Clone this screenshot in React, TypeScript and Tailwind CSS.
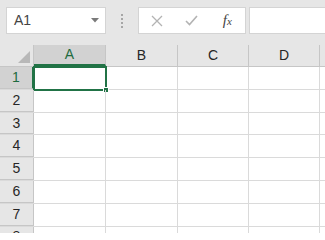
import React from 'react';

const cols = ['A', 'B', 'C', 'D', 'E'];
const colWidths = [72, 72, 71, 71, 40];
const rows = [1, 2, 3, 4, 5, 6, 7, 8];

const font = { fontFamily: '"Liberation Sans", Arial, sans-serif' };

export default function App() {
  return (
    <div className="w-[325px] h-[233px] overflow-hidden bg-[#e6e6e6] text-[#262626]" style={font}>
      {/* formula bar */}
      <div className="flex items-center h-[45px] pt-[7px] pb-[11px]">
        <div className="ml-[6px] w-[100px] h-[27px] bg-white border border-[#d4d4d4] flex items-center justify-between pl-[7px] pr-[6px]">
          <span className="text-[14px] text-[#444]">A1</span>
          <svg width="8" height="5" viewBox="0 0 8 5">
            <path d="M0 0 L8 0 L4 4.5 Z" fill="#7a7a7a" />
          </svg>
        </div>
        <div className="w-[32px] flex flex-col items-center gap-[2px]">
          <span className="w-[2px] h-[2px] bg-[#a6a6a6]" />
          <span className="w-[2px] h-[2px] bg-[#a6a6a6]" />
          <span className="w-[2px] h-[2px] bg-[#a6a6a6]" />
          <span className="w-[2px] h-[2px] bg-[#a6a6a6]" />
        </div>
        <div className="w-[108px] h-[27px] bg-white border border-[#d4d4d4] flex items-center">
          <div className="w-[36px] flex justify-center">
            <svg width="12" height="12" viewBox="0 0 12 12">
              <path d="M1 1 L11 11 M11 1 L1 11" stroke="#b3b3b3" strokeWidth="1.3" />
            </svg>
          </div>
          <div className="w-[36px] flex justify-center">
            <svg width="13" height="11" viewBox="0 0 13 11">
              <path d="M1 6 L4.5 9.5 L12 1" stroke="#b3b3b3" strokeWidth="1.6" fill="none" />
            </svg>
          </div>
          <div className="w-[36px] flex justify-center">
            <span className="italic text-[15px] text-[#444]" style={{ fontFamily: '"Liberation Serif", serif' }}>
              f<span className="text-[11px]">x</span>
            </span>
          </div>
        </div>
        <div className="ml-[3px] flex-1 h-[27px] bg-white border border-[#d4d4d4] border-r-0" />
      </div>

      {/* grid */}
      <div className="bg-white">
        <div className="flex h-[22px] bg-[#e6e6e6] border-b border-[#c6c6c6]">
          <div className="w-[34px] shrink-0 relative border-r border-[#c6c6c6]">
            <svg className="absolute right-[3px] bottom-[3px]" width="12" height="12" viewBox="0 0 12 12">
              <path d="M12 0 L12 12 L0 12 Z" fill="#b8b8b8" />
            </svg>
          </div>
          {cols.map((c, i) => (
            <div
              key={c}
              style={{ width: colWidths[i] }}
              className={`shrink-0 flex items-center justify-center text-[14px] border-r border-[#c6c6c6] ${
                i === 0 ? 'bg-[#d2d2d2] text-[#1e6b40] border-b-2 border-b-[#217346]' : 'text-[#262626]'
              }`}
            >
              {c}
            </div>
          ))}
        </div>
        {rows.map((r) => (
          <div key={r} className="flex h-[22.8px] border-b border-[#dadada] relative">
            <div
              className={`w-[34px] shrink-0 flex items-center justify-center text-[14px] border-r border-[#c6c6c6] border-b border-b-[#c6c6c6] ${
                r === 1 ? 'bg-[#d2d2d2] text-[#1e6b40] border-r-2 border-r-[#217346]' : 'bg-[#e6e6e6] text-[#262626]'
              }`}
            >
              {r}
            </div>
            {cols.map((c, i) => (
              <div key={c} style={{ width: colWidths[i] }} className="shrink-0 border-r border-[#dadada]" />
            ))}
            {r === 1 && (
              <>
                <div className="absolute left-[33px] top-[-1px] w-[74px] h-[24.8px] border-2 border-[#217346]" />
                <div className="absolute left-[103px] top-[20px] w-[6px] h-[6px] bg-[#217346] border border-white" />
              </>
            )}
          </div>
        ))}
      </div>
    </div>
  );
}
